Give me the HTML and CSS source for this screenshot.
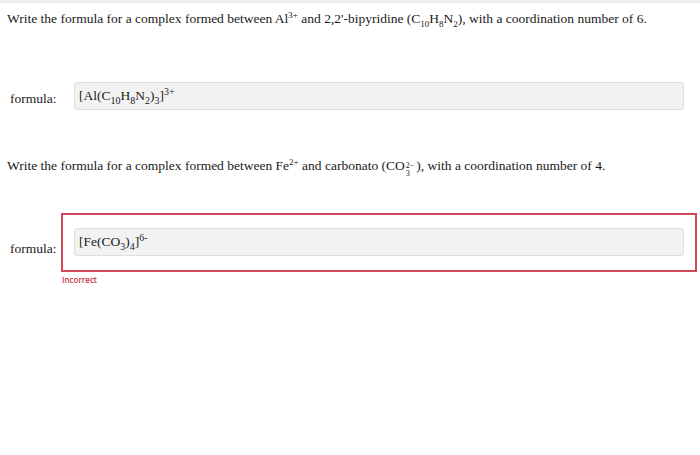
FILE: index.html
```html
<!DOCTYPE html>
<html lang="en">
<head>
  <meta charset="UTF-8">
  <title>Coordination complexes</title>
  <link rel="stylesheet" href="styles.css">
</head>
<body>
  <div class="top-bar"></div>
  <div class="question">
    <p class="prompt">Write the formula for a complex formed between Al<sup>3+</sup> and 2,2'-bipyridine (C<sub>10</sub>H<sub>8</sub>N<sub>2</sub>), with a coordination number of 6.</p>
    <div class="answer-row">
      <span class="label">formula:</span>
      <div class="answer-box">
        <div class="answer-input">[Al(C<sub>10</sub>H<sub>8</sub>N<sub>2</sub>)<sub>3</sub>]<sup>3+</sup></div>
      </div>
    </div>
  </div>

  <div class="question second">
    <p class="prompt">Write the formula for a complex formed between Fe<sup>2+</sup> and carbonato (CO<span class="ion"><span class="ion-charge">2&minus;</span><span class="ion-count">3</span></span>), with a coordination number of 4.</p>
    <div class="answer-row">
      <span class="label">formula:</span>
      <div class="answer-box wrong">
        <div class="answer-input">[Fe(CO<sub>3</sub>)<sub>4</sub>]<sup>6-</sup></div>
      </div>
    </div>
    <div class="feedback">Incorrect</div>
  </div>
</body>
</html>
```

FILE: styles.css
```css
body {
  margin: 0;
  padding: 0;
  background: white;
  color: #1a1a1a;
  font-family: 'Liberation Serif', 'Times New Roman', serif;
  font-size: 13.5px;
}
.top-bar {
  height: 3px;
  background: #ececec;
}
.question {
  padding-left: 7px;
}
.prompt {
  margin: 7px 0 0 0;
  line-height: 18px;
}
sup, sub {
  font-size: 9px;
  line-height: 0;
}
.ion {
  display: inline-block;
  vertical-align: -6px;
  margin-left: 1px;
  margin-right: 2px;
  font-size: 8px;
  line-height: 8px;
}
.ion-charge, .ion-count {
  display: block;
}
.answer-row {
  display: flex;
  align-items: center;
  margin-top: 52px;
}
.label {
  width: 51px;
  padding-left: 3px;
  padding-top: 5px;
}
.answer-box {
  flex: 1;
  margin-right: 3px;
  padding: 0 11px;
  border: 2px solid transparent;
}
.answer-input {
  height: 26px;
  line-height: 26px;
  padding-left: 4px;
  background: #f2f2f2;
  border: 1px solid #dedede;
  border-radius: 3px;
  font-size: 13.5px;
}
.answer-input sub, .answer-input sup {
  font-size: 10px;
}
.second .prompt {
  margin-top: 45px;
}
.second .answer-row {
  margin-top: 35px;
}
.second .label {
  padding-top: 12px;
}
.wrong {
  border-color: #d24757;
  padding-top: 13px;
  padding-bottom: 14px;
}
.feedback {
  margin-left: 55px;
  margin-top: 2px;
  font-family: 'Open Sans', sans-serif;
  font-size: 8px;
  font-weight: 600;
  color: #c8303f;
}
```
